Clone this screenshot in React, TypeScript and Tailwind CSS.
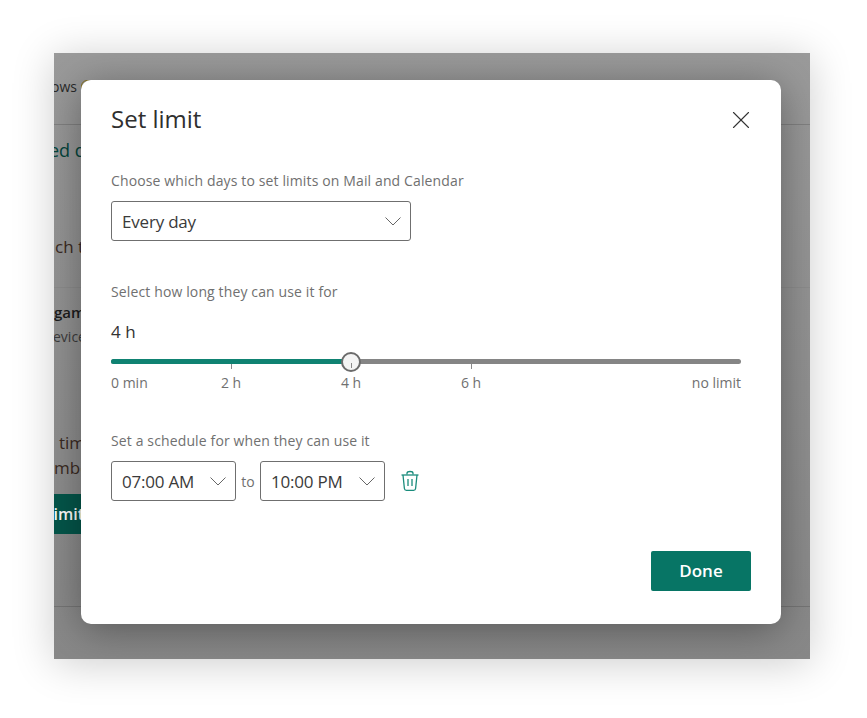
import { X } from "lucide-react";

const font = "font-['Open_Sans','Noto_Sans',sans-serif]";
const label = "text-[14px] leading-5 tracking-[0.13px] text-[#707070]";

function Select({ text, className }: { text: string; className: string }) {
  return (
    <div className={`flex h-10 items-center justify-between rounded-[3px] border border-[#6f6f6f] pl-[10px] pr-[9px] text-[17px] tracking-[-0.2px] text-[#3a3a3a] ${className}`}>
      <span className="pt-[1px]">{text}</span>
      <svg width="16" height="9" viewBox="0 0 16 9" fill="none" stroke="#666" strokeWidth="1">
        <path d="M.5.5 8 8 15.500.5" />
      </svg>
    </div>
  );
}

function TrashIcon() {
  return (
    <svg width="20" height="22" viewBox="0 0 20 22" fill="none" stroke="#1a8c7c" strokeWidth="1.3">
      <path d="M1.500 5h17" />
      <path d="M7 4.500V3.200C7 2 8 1.500 10 1.500s3 .5 3 1.700v1.300" />
      <path d="M3 5l1.400 13.500c.1 1 .9 1.800 2 1.800h7.200c1.100 0 1.900-.8 2-1.800L17 5" />
      <path d="M8 9v7M12 9v7" />
    </svg>
  );
}

function Slider() {
  return (
    <div className="relative mt-[10px] h-[21px] pt-[7px]">
      <div className="flex h-[5px] overflow-hidden rounded-full bg-[#858585]">
        <div className="h-full w-[240px] bg-[#0f8272]" />
      </div>
      {/* ticks */}
      <div className="absolute left-[120px] top-[12px] h-[5px] w-px bg-[#8a8a8a]" />
      <div className="absolute left-[360px] top-[12px] h-[5px] w-px bg-[#8a8a8a]" />
      {/* thumb */}
      <div className="absolute left-[230px] top-0 flex h-5 w-5 justify-center rounded-full border-2 border-[#6b6b6b] bg-[#f4f4f4]">
        <div className="mt-[9px] h-[5px] w-px bg-[#8a8a8a]" />
      </div>
    </div>
  );
}

export default function App() {
  return (
    <div className={`h-[718px] w-[867px] overflow-hidden bg-white pl-[54px] pt-[53px] ${font}`}>
      <div className="relative h-[606px] w-[756px] overflow-hidden bg-gradient-to-b from-[#9a9a9a] to-[#888888] shadow-[0_4px_40px_rgba(0,0,0,0.2)]">
        {/* page behind the dialog */}
        <div className="absolute inset-0 text-[#2a2a2a]">
          <div className="flex h-[72px] items-center gap-[4px] border-b border-[#808080] pb-[5px] text-[14px]">
            <span className="ml-[-3px]">ows</span>
            <span className="h-3 w-3 rounded-full border border-[#8a7420]" />
          </div>
          <div className="ml-[-5px] mt-[13px] text-[18px] leading-6 text-[#04453b]">ed d</div>
          <div className="ml-[1px] mt-[73px] text-[17px] leading-6 text-[#3a2a22]">ch t</div>
          <div className="mt-[28px] h-px bg-[#8c8c8c]" />
          <div className="mt-[14px] text-[15px] font-semibold leading-5 text-[#1c1c1c]">gam</div>
          <div className="ml-[-1px] mt-[5px] text-[14px] leading-5 text-[#3c3c3c]">evice</div>
          <div className="ml-[5px] mt-[84px] text-[17px] leading-6 text-[#3a2a22]">tim</div>
          <div className="mt-[1px] text-[17px] leading-6 text-[#3a2a22]">mbe</div>
          <div className="mt-[14px] flex h-10 w-[27px] items-center overflow-hidden bg-[#04564a] text-[16px] font-semibold text-white">
            <span className="ml-[-5px]">limit</span>
          </div>
          <div className="mt-[72px] h-px bg-[#757575]" />
        </div>

        {/* dialog */}
        <div className="absolute left-[27px] top-[27px] h-[544px] w-[700px] rounded-[10px] bg-white pl-[30px] pr-[40px] pt-[22px] shadow-[0_6px_40px_rgba(0,0,0,0.36)]">
          <div className="flex items-center justify-between">
            <h1 className="text-[24px] font-[530] leading-[34px] tracking-[0px] text-[#2f2f2f]">Set limit</h1>
            <X size={30} strokeWidth={0.9} className="mr-[-15px] mt-[2px] text-[#333]" />
          </div>

          <p className={`mt-[35px] ${label}`}>Choose which days to set limits on Mail and Calendar</p>
          <Select text="Every day" className="mt-[10px] w-[300px]" />

          <p className={`mt-[41px] ${label}`}>Select how long they can use it for</p>
          <p className="mt-[20px] text-[17px] font-[530] leading-5 text-[#333]">4 h</p>
          <Slider />

          <div className="relative flex h-5 justify-between text-[14px] leading-5 text-[#707070]">
            <span>0 min</span>
            <span className="absolute left-[120px] -translate-x-1/2">2 h</span>
            <span className="absolute left-[240px] -translate-x-1/2">4 h</span>
            <span className="absolute left-[360px] -translate-x-1/2">6 h</span>
            <span>no limit</span>
          </div>

          <p className={`mt-[38px] ${label}`}>Set a schedule for when they can use it</p>
          <div className="mt-[10px] flex items-center">
            <Select text="07:00 AM" className="w-[125px]" />
            <span className="w-6 text-center text-[14px] text-[#707070]">to</span>
            <Select text="10:00 PM" className="w-[125px]" />
            <div className="ml-[15px]">
              <TrashIcon />
            </div>
          </div>

          <div className="mt-[50px] flex justify-end">
            <button className="mr-[-10px] h-10 w-[100px] rounded-[2px] bg-[#077565] text-[17px] font-semibold text-white">Done</button>
          </div>
        </div>
      </div>
    </div>
  );
}
